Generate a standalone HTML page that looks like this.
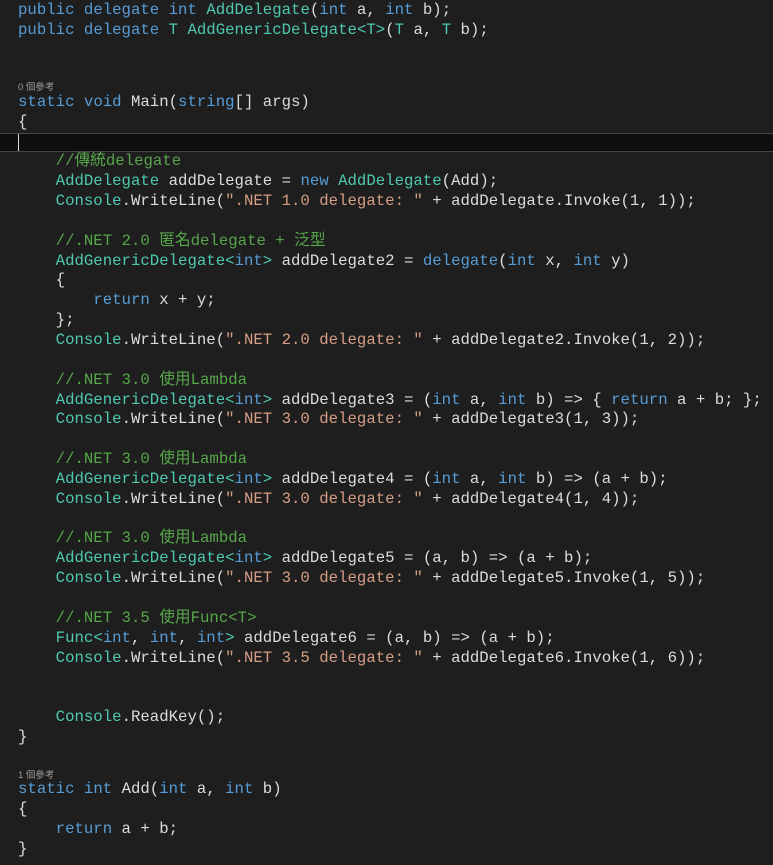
<!DOCTYPE html>
<html><head><meta charset="utf-8"><style>
html,body{margin:0;padding:0;background:#1e1e1e;width:773px;height:865px;overflow:hidden}
#c{position:absolute;left:18px;top:1px;font-family:"Liberation Mono","Noto Sans CJK TC",monospace;font-size:15.7px;color:#dcdcdc}
.l{height:19.85px;line-height:19.85px;white-space:pre}
.cl{height:12.5px;line-height:12px;font-family:"Liberation Sans","Noto Sans CJK TC",sans-serif;font-size:9.5px;color:#999;position:relative;top:2px;white-space:pre}
.k{color:#569cd6}.t{color:#4ec9b0}.c{color:#57a64a}.s{color:#d69d85}
#cur{position:absolute;left:0;top:133px;width:773px;height:17px;background:#0f0f0f;border-top:1px solid #464646;border-bottom:1px solid #464646}
#caret{position:absolute;left:18px;top:134px;width:1px;height:17px;background:#dcdcdc}
</style></head><body>
<div id="cur"></div><div id="caret"></div>
<div id="c"><div class="l"><span class="k">public</span> <span class="k">delegate</span> <span class="k">int</span> <span class="t">AddDelegate</span>(<span class="k">int</span> a, <span class="k">int</span> b);</div><div class="l"><span class="k">public</span> <span class="k">delegate</span> <span class="t">T</span> <span class="t">AddGenericDelegate</span><span class="t">&lt;T&gt;</span>(<span class="t">T</span> a, <span class="t">T</span> b);</div><div class="l"> </div><div class="l"> </div><div class="cl">0 個參考</div><div class="l"><span class="k">static</span> <span class="k">void</span> Main(<span class="k">string</span>[] args)</div><div class="l">{</div><div class="l"> </div><div class="l">    <span class="c">//傳統delegate</span></div><div class="l">    <span class="t">AddDelegate</span> addDelegate = <span class="k">new</span> <span class="t">AddDelegate</span>(Add);</div><div class="l">    <span class="t">Console</span>.WriteLine(<span class="s">".NET 1.0 delegate: "</span> + addDelegate.Invoke(1, 1));</div><div class="l"> </div><div class="l">    <span class="c">//.NET 2.0 匿名delegate + 泛型</span></div><div class="l">    <span class="t">AddGenericDelegate</span><span class="t">&lt;</span><span class="k">int</span><span class="t">&gt;</span> addDelegate2 = <span class="k">delegate</span>(<span class="k">int</span> x, <span class="k">int</span> y)</div><div class="l">    {</div><div class="l">        <span class="k">return</span> x + y;</div><div class="l">    };</div><div class="l">    <span class="t">Console</span>.WriteLine(<span class="s">".NET 2.0 delegate: "</span> + addDelegate2.Invoke(1, 2));</div><div class="l"> </div><div class="l">    <span class="c">//.NET 3.0 使用Lambda</span></div><div class="l">    <span class="t">AddGenericDelegate</span><span class="t">&lt;</span><span class="k">int</span><span class="t">&gt;</span> addDelegate3 = (<span class="k">int</span> a, <span class="k">int</span> b) =&gt; { <span class="k">return</span> a + b; };</div><div class="l">    <span class="t">Console</span>.WriteLine(<span class="s">".NET 3.0 delegate: "</span> + addDelegate3(1, 3));</div><div class="l"> </div><div class="l">    <span class="c">//.NET 3.0 使用Lambda</span></div><div class="l">    <span class="t">AddGenericDelegate</span><span class="t">&lt;</span><span class="k">int</span><span class="t">&gt;</span> addDelegate4 = (<span class="k">int</span> a, <span class="k">int</span> b) =&gt; (a + b);</div><div class="l">    <span class="t">Console</span>.WriteLine(<span class="s">".NET 3.0 delegate: "</span> + addDelegate4(1, 4));</div><div class="l"> </div><div class="l">    <span class="c">//.NET 3.0 使用Lambda</span></div><div class="l">    <span class="t">AddGenericDelegate</span><span class="t">&lt;</span><span class="k">int</span><span class="t">&gt;</span> addDelegate5 = (a, b) =&gt; (a + b);</div><div class="l">    <span class="t">Console</span>.WriteLine(<span class="s">".NET 3.0 delegate: "</span> + addDelegate5.Invoke(1, 5));</div><div class="l"> </div><div class="l">    <span class="c">//.NET 3.5 使用Func&lt;T&gt;</span></div><div class="l">    <span class="t">Func</span><span class="t">&lt;</span><span class="k">int</span>, <span class="k">int</span>, <span class="k">int</span><span class="t">&gt;</span> addDelegate6 = (a, b) =&gt; (a + b);</div><div class="l">    <span class="t">Console</span>.WriteLine(<span class="s">".NET 3.5 delegate: "</span> + addDelegate6.Invoke(1, 6));</div><div class="l"> </div><div class="l"> </div><div class="l">    <span class="t">Console</span>.ReadKey();</div><div class="l">}</div><div class="l"> </div><div class="cl">1 個參考</div><div class="l"><span class="k">static</span> <span class="k">int</span> Add(<span class="k">int</span> a, <span class="k">int</span> b)</div><div class="l">{</div><div class="l">    <span class="k">return</span> a + b;</div><div class="l">}</div></div>
</body></html>
